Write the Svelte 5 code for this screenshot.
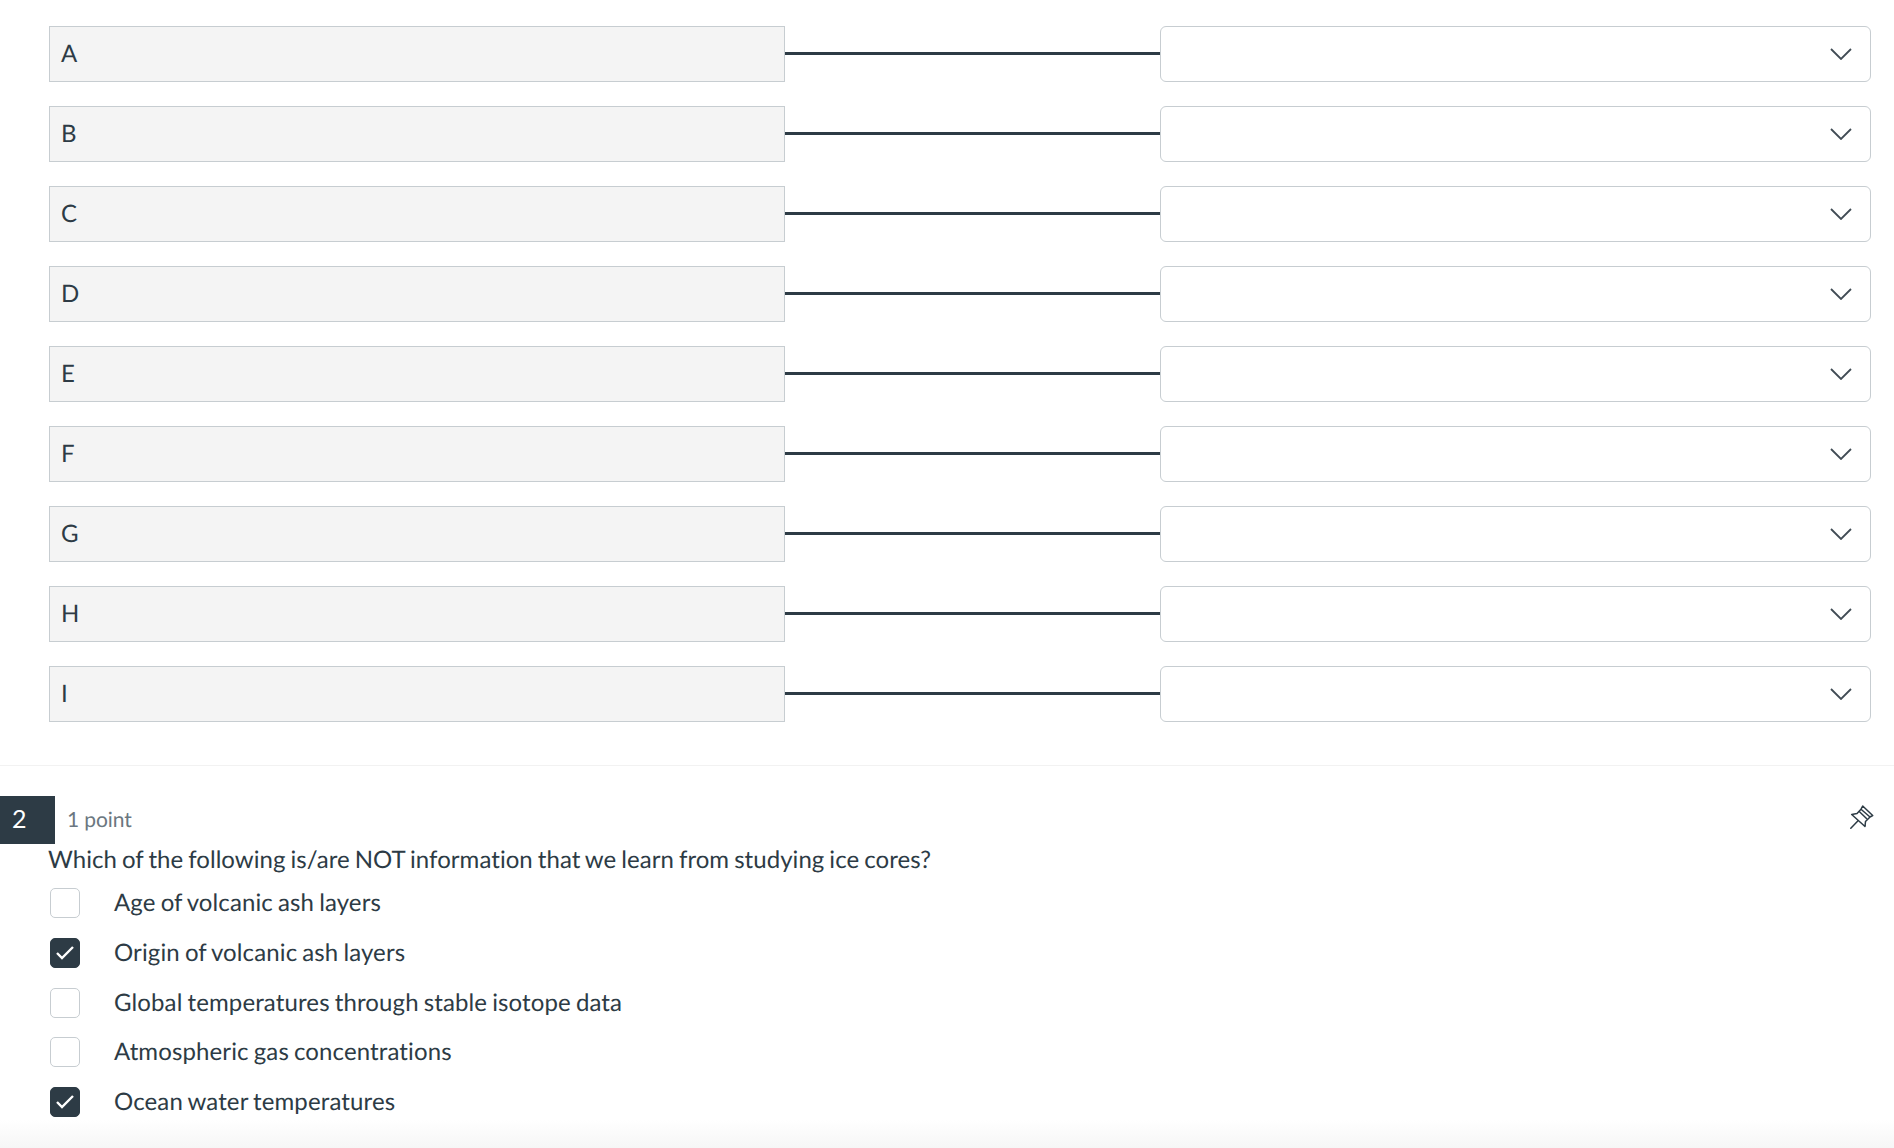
<script>
	const rows = ['A', 'B', 'C', 'D', 'E', 'F', 'G', 'H', 'I'];
	const options = [
		{ label: 'Age of volcanic ash layers', checked: false },
		{ label: 'Origin of volcanic ash layers', checked: true },
		{ label: 'Global temperatures through stable isotope data', checked: false },
		{ label: 'Atmospheric gas concentrations', checked: false },
		{ label: 'Ocean water temperatures', checked: true }
	];
</script>

<div class="page">
	<div class="matching">
		{#each rows as row}
			<div class="match-row">
				<div class="term">{row}</div>
				<div class="line"></div>
				<div class="select">
					<svg width="22" height="12" viewBox="0 0 22 12" fill="none">
						<path d="M1 1l10 10L21 1" stroke="#414c55" stroke-width="1.8" />
					</svg>
				</div>
			</div>
		{/each}
	</div>

	<section class="question">
		<div class="q-head">
			<div class="q-number">2</div>
			<div class="q-points">1 point</div>
			<svg class="pin" width="24" height="24" viewBox="0 0 24 24" fill="none" stroke="#2d3b45" stroke-width="1.5" stroke-linejoin="round">
				<path d="M.8 23.200l7-7.300" stroke-linecap="round" />
				<path d="M12.700 1l10 9.500-2.700 1.500-4.500 4.500-.5 5L1.700 9.500l5.300-1 4-4.300z" />
				<path d="M11 4.200L20 12M9 6.300l8 7.700" />
			</svg>
		</div>
		<p class="q-text">Which of the following is/are NOT information that we learn from studying ice cores?</p>
		<ul class="options">
			{#each options as opt}
				<li>
					<span class="box" class:checked={opt.checked}>
						{#if opt.checked}
							<svg width="18" height="14" viewBox="0 0 18 14" fill="none">
								<path d="M1 7l5 5L17 1" stroke="#fff" stroke-width="2.4" />
							</svg>
						{/if}
					</span>
					<span class="label">{opt.label}</span>
				</li>
			{/each}
		</ul>
	</section>
</div>

<style>
	:global(body) {
		margin: 0;
		background: #fff;
		font-family: Lato, sans-serif;
		font-variant-ligatures: none;
		color: #2d3b45;
		text-rendering: geometricPrecision;
	}

	.page {
		height: 1148px;
		overflow: hidden;
		background: linear-gradient(#fff 1120px, #f6f6f6 1148px);
	}

	.matching {
		display: flex;
		flex-direction: column;
		gap: 24px;
		padding: 26px 23px 43px 49px;
	}

	.match-row {
		display: flex;
		align-items: center;
		height: 56px;
	}

	.term {
		box-sizing: border-box;
		width: 736px;
		height: 56px;
		display: flex;
		align-items: center;
		padding: 0 0 2px 11px;
		background: #f4f4f4;
		border: 1px solid #c7cdd1;
		font-size: 24px;
	}

	.line {
		width: 375px;
		height: 3px;
		margin-top: -1px;
		background: #2d3b45;
	}

	.select {
		box-sizing: border-box;
		flex: 1;
		height: 56px;
		display: flex;
		align-items: center;
		justify-content: flex-end;
		padding: 0 18px 1px 0;
		background: #fff;
		border: 1px solid #c7cdd1;
		border-radius: 6px;
	}

	.question {
		border-top: 1px solid #f2f2f2;
		padding-top: 30px;
	}

	.q-head {
		display: flex;
		align-items: center;
		height: 48px;
	}

	.q-number {
		box-sizing: border-box;
		width: 55px;
		height: 48px;
		padding-left: 12px;
		line-height: 46px;
		background: #2d3b45;
		color: #fff;
		font-size: 25px;
	}

	.q-points {
		margin: -2px 0 0 12px;
		font-size: 21px;
		letter-spacing: -0.1px;
		color: #6b7780;
	}

	.pin {
		margin: -6px 20px 0 auto;
	}

	.q-text {
		margin: 0;
		padding-left: 48px;
		font-size: 24px;
		line-height: 32px;
		letter-spacing: 0.05px;
		word-spacing: -1.2px;
	}

	.options {
		list-style: none;
		margin: 0;
		padding: 12px 0 0 50px;
		display: flex;
		flex-direction: column;
		gap: 19.75px;
	}

	.options li {
		display: flex;
		align-items: center;
		height: 30px;
	}

	.box {
		box-sizing: border-box;
		width: 30px;
		height: 30px;
		display: flex;
		align-items: center;
		justify-content: center;
		border: 1px solid #c7cdd1;
		border-radius: 5px;
		background: #fff;
	}

	.box.checked {
		background: #2d3b45;
		border-color: #2d3b45;
	}

	.label {
		margin: -1px 0 0 34px;
		font-size: 24px;
		letter-spacing: 0.12px;
		word-spacing: -1.2px;
	}
</style>
